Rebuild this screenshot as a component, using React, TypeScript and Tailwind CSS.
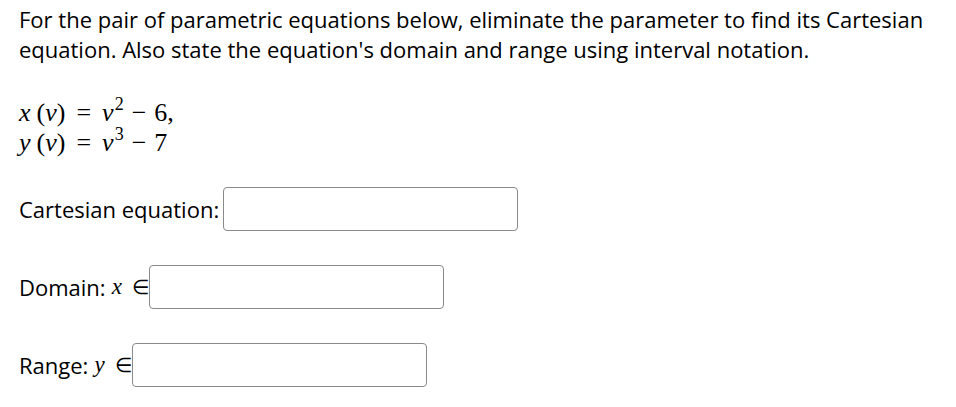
import React from "react";

function Var({ children }: { children: React.ReactNode }) {
  return <span className="font-['Liberation_Serif',serif] italic">{children}</span>;
}

function MathLine({ fn, power, constant, comma }: { fn: string; power: string; constant: string; comma?: boolean }) {
  return (
    <div className="flex items-baseline font-['Liberation_Serif',serif] text-[26px] leading-[30px] text-black">
      <Var>{fn}</Var>
      <span className="ml-[6px]">(</span>
      <Var>v</Var>
      <span>)</span>
      <span className="mx-[11px]">=</span>
      <Var>v</Var>
      <span className="relative -top-[11px] ml-[1px] text-[18px] leading-none">{power}</span>
      <span className="mx-[8px]">−</span>
      <span>{constant}</span>
      {comma && <span>,</span>}
    </div>
  );
}

function AnswerBox({ width }: { width: string }) {
  return (
    <input
      type="text"
      className={`h-[44px] ${width} rounded-[4px] border border-[#8a8a8a] bg-white outline-none`}
    />
  );
}

export default function App() {
  return (
    <main className="min-h-screen bg-white px-[19px] pt-[4px] font-['Open_Sans','Noto_Sans',sans-serif] text-black">
      <p className="text-[22px] leading-[30px]">
        For the pair of parametric equations below, eliminate the parameter to find its Cartesian
        equation. Also state the equation's domain and range using interval notation.
      </p>

      <div className="mt-[34px]">
        <MathLine fn="x" power="2" constant="6" comma />
        <MathLine fn="y" power="3" constant="7" />
      </div>

      <div className="mt-[29px] flex items-center text-[22px]">
        <span className="mr-[4px]">Cartesian equation:</span>
        <AnswerBox width="w-[295px]" />
      </div>

      <div className="mt-[34px] flex items-center text-[22px]">
        <span>Domain:</span>
        <span className="ml-[6px] flex items-baseline font-['Liberation_Serif',serif] text-[23px]">
          <Var>x</Var>
          <span className="ml-[10px] text-[20px]">∈</span>
        </span>
        <AnswerBox width="w-[295px]" />
      </div>

      <div className="mt-[34px] flex items-center text-[22px]">
        <span>Range:</span>
        <span className="ml-[6px] flex items-baseline font-['Liberation_Serif',serif] text-[23px]">
          <Var>y</Var>
          <span className="ml-[10px] text-[20px]">∈</span>
        </span>
        <AnswerBox width="w-[295px]" />
      </div>
    </main>
  );
}
